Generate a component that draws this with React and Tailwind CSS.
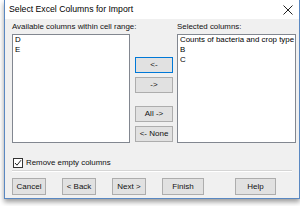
import React from "react";

const font = { fontFamily: '"Liberation Sans", Arial, sans-serif' };

function Btn({ children, className = "", focused = false }) {
  return (
    <div
      className={`flex items-center justify-center bg-[#e1e1e1] border text-[8px] leading-none text-[#111] ${
        focused ? "border-[#0078d7]" : "border-[#adadad]"
      } ${className}`}
    >
      {children}
    </div>
  );
}

export default function App() {
  return (
    <div className="w-[300px] h-[206px] bg-white overflow-hidden" style={font}>
      <div className="ml-[4px] w-[296px] h-[199px] flex flex-col bg-[#f0f0f0] border-x border-b border-[#5a88c2] shadow-[0_3px_5px_rgba(0,0,0,0.4)]">
        {/* Title bar */}
        <div className="h-[19px] bg-white flex items-center justify-between pl-[4px] pr-[6px]">
          <span className="text-[8.7px] text-black">Select Excel Columns for Import</span>
          <svg width="10" height="10" viewBox="0 0 10 10">
            <path d="M0.5 0.5 L9.5 9.5 M9.5 0.5 L0.5 9.5" stroke="#222" strokeWidth="1" />
          </svg>
        </div>

        {/* Body */}
        <div className="flex flex-col pl-[7px]">
          <div className="h-[15px] flex items-center text-[7.9px] text-[#111]">
            <span className="w-[165px]">Available columns within cell range:</span>
            <span>Selected columns:</span>
          </div>

          <div className="h-[109px] flex">
            <div className="w-[118px] border border-[#828790] bg-white pl-[2px] text-[7.9px] leading-[10px]">
              <div>D</div>
              <div>E</div>
            </div>
            <div className="w-[38px] ml-[5px] flex flex-col pt-[23px]">
              <Btn className="h-[16px]" focused>&lt;-</Btn>
              <Btn className="h-[16px] mt-[4px]">-&gt;</Btn>
              <Btn className="h-[16px] mt-[13px]">All -&gt;</Btn>
              <Btn className="h-[16px] mt-[4px]">&lt;- None</Btn>
            </div>
            <div className="w-[119px] ml-[4px] border border-[#828790] bg-white pl-[2px] text-[7.9px] leading-[10px] whitespace-nowrap overflow-hidden">
              <div>Counts of bacteria and crop type</div>
              <div>B</div>
              <div>C</div>
            </div>
          </div>

          <div className="mt-[15px] h-[10px] flex items-center pl-[1px]">
            <div className="w-[10px] h-[10px] border border-[#333] bg-white flex items-center justify-center">
              <svg width="8" height="8" viewBox="0 0 8 8">
                <path d="M1 4 L3 6.2 L7 1.2" fill="none" stroke="#222" strokeWidth="1" />
              </svg>
            </div>
            <span className="ml-[3px] text-[7.9px] text-[#111]">Remove empty columns</span>
          </div>

          <div className="mt-[2px] w-[280px] h-[2px] border-t border-[#d5d5d5] border-b border-b-white" />

          <div className="mt-[6px] h-[17px] flex">
            <Btn className="w-[34px]">Cancel</Btn>
            <Btn className="w-[34px] ml-[16px]">&lt; Back</Btn>
            <Btn className="w-[34px] ml-[16px]">Next &gt;</Btn>
            <Btn className="w-[42px] ml-[16px]">Finish</Btn>
            <Btn className="w-[41px] ml-[31px]">Help</Btn>
          </div>
        </div>
      </div>
    </div>
  );
}
